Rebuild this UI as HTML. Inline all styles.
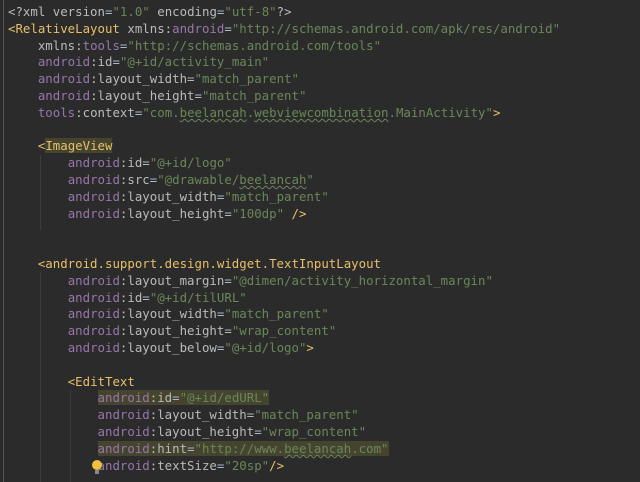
<!DOCTYPE html>
<html><head><style>
body{margin:0;width:640px;height:482px;background:#2b2b2b;overflow:hidden;position:relative;font-family:"DejaVu Sans Mono","Liberation Mono",monospace;font-size:12.4px;color:#a9b7c6}
.l{position:absolute;left:8px;height:16.8px;line-height:16.8px;white-space:pre}
.t{color:#e8bf6a}.n{color:#9876aa}.s{color:#6a8759}.a{color:#bababa}
.h{background:#45452f}
.u{text-decoration:underline wavy #6a8759;text-decoration-thickness:1px}
.g{position:absolute;left:3px;top:0;width:1px;height:482px;background:#555}
.v{position:absolute;width:1px;background:#3c3c3c}
</style></head><body>
<div class="g"></div>
<div class="v" style="left:40px;top:155px;height:75px"></div>
<div class="v" style="left:40px;top:272px;height:210px"></div>
<div class="v" style="left:70px;top:390px;height:92px"></div>
<div class="l" style="top:4px"><span class="a">&lt;?xml version</span>=<span class="s">"1.0"</span> <span class="a">encoding</span>=<span class="s">"utf-8"</span><span class="a">?&gt;</span></div>
<div class="l" style="top:20.8px"><span class="t">&lt;RelativeLayout </span><span class="a">xmlns:</span><span class="n">android</span>=<span class="s">"http://schemas.android.com/apk/res/android"</span></div>
<div class="l" style="top:37.6px">    <span class="a">xmlns:</span><span class="n">tools</span>=<span class="s">"http://schemas.android.com/tools"</span></div>
<div class="l" style="top:54.4px">    <span class="n">android</span><span class="a">:id</span>=<span class="s">"@+id/activity_main"</span></div>
<div class="l" style="top:71.2px">    <span class="n">android</span><span class="a">:layout_width</span>=<span class="s">"match_parent"</span></div>
<div class="l" style="top:88px">    <span class="n">android</span><span class="a">:layout_height</span>=<span class="s">"match_parent"</span></div>
<div class="l" style="top:104.8px">    <span class="n">tools</span><span class="a">:context</span>=<span class="s">"com.<span class="u">beelancah</span>.<span class="u">webviewcombination</span>.MainActivity"</span><span class="t">&gt;</span></div>
<div class="l" style="top:138.4px">    <span class="t">&lt;<span class="h">ImageView</span></span></div>
<div class="l" style="top:155.2px">        <span class="n">android</span><span class="a">:id</span>=<span class="s">"@+id/logo"</span></div>
<div class="l" style="top:172px">        <span class="n">android</span><span class="a">:src</span>=<span class="s">"@drawable/<span class="u">beelancah</span>"</span></div>
<div class="l" style="top:188.8px">        <span class="n">android</span><span class="a">:layout_width</span>=<span class="s">"match_parent"</span></div>
<div class="l" style="top:205.6px">        <span class="n">android</span><span class="a">:layout_height</span>=<span class="s">"100dp"</span> <span class="t">/&gt;</span></div>
<div class="l" style="top:256px">    <span class="t">&lt;android.support.design.widget.TextInputLayout</span></div>
<div class="l" style="top:272.8px">        <span class="n">android</span><span class="a">:layout_margin</span>=<span class="s">"@dimen/activity_horizontal_margin"</span></div>
<div class="l" style="top:289.6px">        <span class="n">android</span><span class="a">:id</span>=<span class="s">"@+id/tilURL"</span></div>
<div class="l" style="top:306.4px">        <span class="n">android</span><span class="a">:layout_width</span>=<span class="s">"match_parent"</span></div>
<div class="l" style="top:323.2px">        <span class="n">android</span><span class="a">:layout_height</span>=<span class="s">"wrap_content"</span></div>
<div class="l" style="top:340px">        <span class="n">android</span><span class="a">:layout_below</span>=<span class="s">"@+id/logo"</span><span class="t">&gt;</span></div>
<div class="l" style="top:373.6px">        <span class="t">&lt;EditText</span></div>
<div class="l" style="top:390.4px">            <span class="h"><span class="n">android</span><span class="a">:id</span>=<span class="s">"@+id/edURL"</span></span></div>
<div class="l" style="top:407.2px">            <span class="n">android</span><span class="a">:layout_width</span>=<span class="s">"match_parent"</span></div>
<div class="l" style="top:424px">            <span class="n">android</span><span class="a">:layout_height</span>=<span class="s">"wrap_content"</span></div>
<div class="l" style="top:440.8px">            <span class="h"><span class="n">android</span><span class="a">:hint</span>=<span class="s">"http://www.<span class="u">beelancah</span>.com"</span></span></div>
<div class="l" style="top:457.6px">            <span class="n">android</span><span class="a">:textSize</span>=<span class="s">"20sp"</span><span class="t">/&gt;</span></div>
<div style="position:absolute;left:92px;top:460px;width:10px;height:10px;border-radius:50%;background:#f0c040"></div>
<div style="position:absolute;left:95px;top:470px;width:4px;height:4px;background:#888"></div>
</body></html>
